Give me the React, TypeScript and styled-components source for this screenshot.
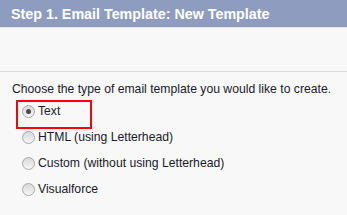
import styled, { createGlobalStyle } from 'styled-components'

const GlobalStyle = createGlobalStyle`
    body {
        margin: 0;
        background: #f8f8f8;
        font-family: "Liberation Sans", Arial, sans-serif;
    }
`

// Styles
const Root = styled.div`
    width: 347px;
    height: 215px;
    background: #f8f8f8;
    overflow: hidden;
`

const StepHeader = styled.div`
    height: 28px;
    box-sizing: border-box;
    padding-left: 11px;
    display: flex;
    align-items: center;
    background: #8e9dbf;
    border-bottom: 1px solid #e4e4ea;
    color: #fff;
    font-size: 14.3px;
    font-weight: bold;
`

const Spacer = styled.div`
    height: 43px;
    border-bottom: 1px solid #dcdcdc;
`

const Section = styled.div`
    padding: 10px 0 0 12px;
`

const Intro = styled.p`
    margin: 0;
    font-size: 12.2px;
    line-height: 15px;
    color: #1a1a2a;
`

const OptionList = styled.div`
    display: flex;
    flex-direction: column;
    margin-top: 1px;
    padding-left: 10px;
`

const OptionRow = styled.label<{ $highlighted?: boolean }>`
    position: relative;
    height: 26px;
    display: flex;
    align-items: center;
    gap: 3px;
    font-size: 12.2px;
    color: #1a1a2a;

    ${({ $highlighted }) => $highlighted && `
        &::after {
            content: '';
            position: absolute;
            left: -6px;
            top: 2px;
            width: 72px;
            height: 25px;
            border: 2px solid #f00;
        }
    `}
`

const Radio = styled.span<{ $checked?: boolean }>`
    width: 13px;
    height: 13px;
    box-sizing: border-box;
    border-radius: 50%;
    border: 1px solid #a9a9a9;
    background: linear-gradient(#d8d8d8, #f6f6f6);
    display: flex;
    align-items: center;
    justify-content: center;
    flex-shrink: 0;

    &::before {
        content: '';
        width: 5px;
        height: 5px;
        border-radius: 50%;
        background: ${({ $checked }) => ($checked ? '#4a4a4a' : 'transparent')};
    }
`

const options = [
    'Text',
    'HTML (using Letterhead)',
    'Custom (without using Letterhead)',
    'Visualforce',
]

function App() {
    return (
        <Root>
            <GlobalStyle />
            <StepHeader>Step 1. Email Template: New Template</StepHeader>
            <Spacer />
            <Section>
                <Intro>Choose the type of email template you would like to create.</Intro>
                <OptionList>
                    {options.map((opt, i) => (
                        <OptionRow key={opt} $highlighted={i === 0}>
                            <Radio $checked={i === 0} />
                            {opt}
                        </OptionRow>
                    ))}
                </OptionList>
            </Section>
        </Root>
    )
}

export default App
